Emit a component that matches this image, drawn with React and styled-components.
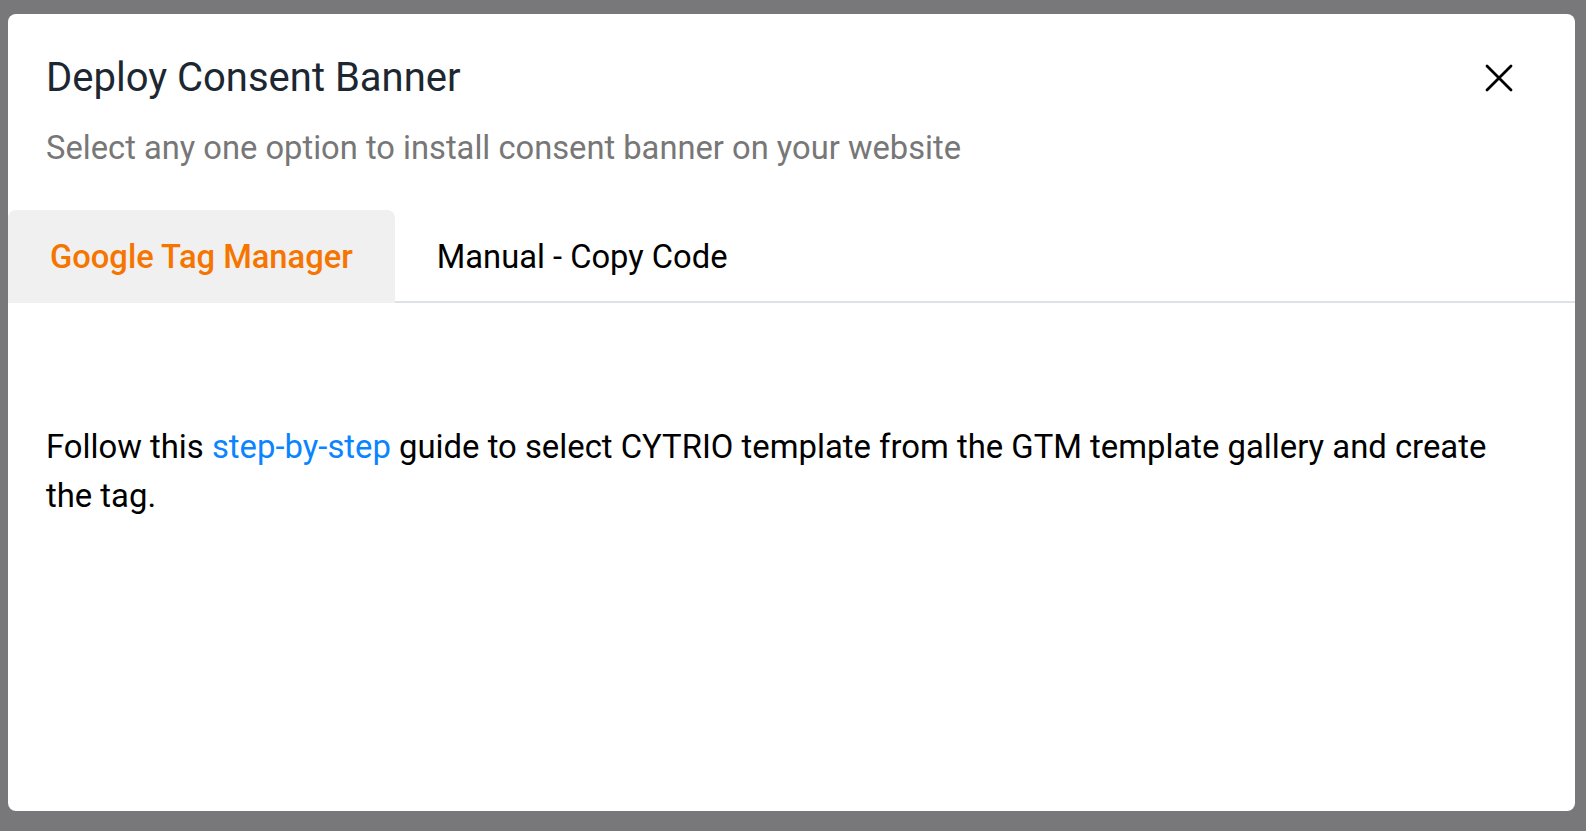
import React, { useState } from 'react'
import styled, { createGlobalStyle } from 'styled-components'

const GlobalStyle = createGlobalStyle`
  html, body {
    margin: 0;
    padding: 0;
    background: #78787a;
    font-family: Roboto, "Noto Sans", Arial, sans-serif;
  }
`

const Backdrop = styled.div`
  height: 831px;
  box-sizing: border-box;
  padding: 14px 11px 20px 8px;
  background: #78787a;
`

const Modal = styled.div`
  height: 100%;
  background: #fff;
  border-radius: 8px;
  display: flex;
  flex-direction: column;
  overflow: hidden;
`

const Header = styled.div`
  display: flex;
  align-items: flex-start;
  justify-content: space-between;
  padding: 42px 62px 0 38px;
`

const Title = styled.h1`
  margin: 0;
  font-size: 40px;
  line-height: 44px;
  font-weight: 400;
  color: #1d2731;
`

const Subtitle = styled.p`
  margin: 28px 0 0;
  font-size: 32.7px;
  line-height: 40px;
  color: #777;
`

const CloseButton = styled.button`
  width: 28px;
  height: 44px;
  padding: 0;
  border: 0;
  background: transparent;
  display: flex;
  align-items: center;
  justify-content: center;
  cursor: pointer;
`

const Tabs = styled.div`
  display: flex;
  margin-top: 42px;
  border-bottom: 2px solid #dee2e6;
`

const Tab = styled.button`
  height: 93px;
  margin-bottom: -2px;
  padding: 0 42px;
  border: 0;
  border-radius: 8px 8px 0 0;
  background: ${p => (p.$active ? '#f0f0f0' : 'transparent')};
  color: ${p => (p.$active ? '#f57500' : '#000')};
  font-family: inherit;
  font-size: 32.7px;
  font-weight: ${p => (p.$active ? 500 : 400)};
  cursor: pointer;
`

const Body = styled.div`
  padding: 120px 70px 0 38px;
  font-size: 32.85px;
  line-height: 48.5px;
  color: #000;
`

const Link = styled.a`
  color: #0a84ff;
  text-decoration: none;
`

const CloseIcon = () => (
  <svg width="28" height="28" viewBox="0 0 28 28" fill="none">
    <path d="M2 2 L26 26 M26 2 L2 26" stroke="#000" strokeWidth="2.8" strokeLinecap="round" />
  </svg>
)

export default function App() {
  const [tab, setTab] = useState(0)
  return (
    <>
      <GlobalStyle />
      <Backdrop>
        <Modal>
          <Header>
            <div>
              <Title>Deploy Consent Banner</Title>
              <Subtitle>Select any one option to install consent banner on your website</Subtitle>
            </div>
            <CloseButton aria-label="Close">
              <CloseIcon />
            </CloseButton>
          </Header>
          <Tabs>
            <Tab $active={tab === 0} onClick={() => setTab(0)}>Google Tag Manager</Tab>
            <Tab $active={tab === 1} onClick={() => setTab(1)}>Manual - Copy Code</Tab>
          </Tabs>
          <Body>
            Follow this <Link href="#">step-by-step</Link> guide to select CYTRIO template from the GTM template gallery and create the tag.
          </Body>
        </Modal>
      </Backdrop>
    </>
  )
}
